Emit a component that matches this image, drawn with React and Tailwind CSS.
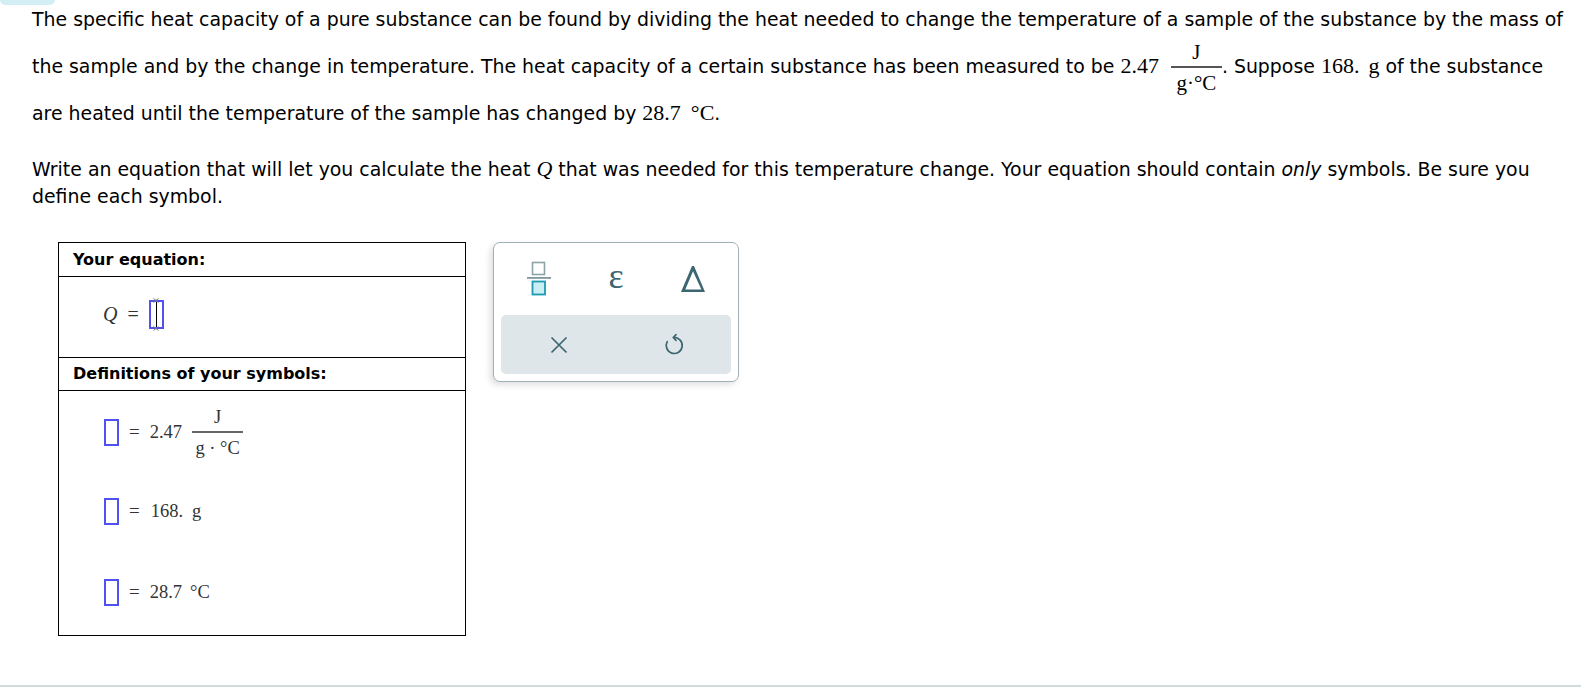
import React from 'react';

// serif math text, like the rendered formulas
const M = ({ children, className = '' }) => (
    <span className={`font-['Liberation_Serif',serif] ${className}`}>{children}</span>
);

function Fraction({ num, den, size = 'text-[20px]', width = 'w-[51px]', lineColor = 'bg-[#555]' }) {
    return (
        <span className={`inline-flex flex-col items-center align-middle -my-[6px] ${width} font-['Liberation_Serif',serif] ${size}`}>
            <span className="leading-[24px] pb-[2px]">{num}</span>
            <span className={`h-[2px] w-full ${lineColor}`} />
            <span className="leading-[24px] pt-[3px]">{den}</span>
        </span>
    );
}

function SymbolBox({ cursor = false, tall = false }) {
    return (
        <span
            className={`relative inline-flex justify-center border-2 border-[#5151f2] bg-white ${tall ? 'w-[15px] h-[29px]' : 'w-[15px] h-[27px]'}`}
        >
            {cursor && (
                <>
                    <span className="w-px h-full bg-black" />
                    <svg className="absolute -top-[4px] left-1/2 -translate-x-1/2" width="7" height="5" viewBox="0 0 7 5">
                        <path d="M1 0.5 L6 4.5 M6 0.5 L1 4.5" stroke="#777" strokeWidth="1" />
                    </svg>
                    <svg className="absolute -bottom-[4px] left-1/2 -translate-x-1/2" width="7" height="5" viewBox="0 0 7 5">
                        <path d="M1 0.5 L6 4.5 M6 0.5 L1 4.5" stroke="#777" strokeWidth="1" />
                    </svg>
                </>
            )}
        </span>
    );
}

function Palette() {
    return (
        <div className="w-[246px] h-[140px] rounded-[7px] border border-[#9fb0b6] bg-white shadow-[-3px_3px_6px_rgba(0,0,0,0.12)] flex flex-col">
            {/* Top row: template buttons */}
            <div className="grid grid-cols-3 px-[6px] h-[72px] items-center">
                <div className="flex justify-center">
                    <svg width="24" height="36" viewBox="0 0 24 36">
                        <rect x="5.5" y="1.5" width="12" height="12" fill="none" stroke="#8da3aa" strokeWidth="1.6" />
                        <rect x="0" y="16" width="24" height="1.8" fill="#7f969e" />
                        <rect x="5.5" y="20.5" width="12.5" height="13" fill="#c9edf2" stroke="#1c9aae" strokeWidth="1.8" />
                    </svg>
                </div>
                <div className="flex justify-center">
                    <span className="font-['Liberation_Serif',serif] text-[36px] leading-none text-[#3d6672] -mt-[6px]">ε</span>
                </div>
                <div className="flex justify-center">
                    <svg width="24" height="26" viewBox="0 0 24 26">
                        <path
                            fillRule="evenodd"
                            fill="#3d6672"
                            d="M11 0 L13 0 L24 26 L0 26 Z M12 5.2 L4.3 23.6 L20.4 23.6 Z"
                        />
                    </svg>
                </div>
            </div>
            {/* Bottom row: clear and undo */}
            <div className="mx-[7px] h-[59px] rounded-[5px] bg-[#dfe6e9] grid grid-cols-2 items-center">
                <div className="flex justify-center">
                    <svg width="18" height="18" viewBox="0 0 18 18">
                        <path d="M1.5 1.5 L16.5 16.5 M16.5 1.5 L1.5 16.5" stroke="#3d6672" strokeWidth="1.7" />
                    </svg>
                </div>
                <div className="flex justify-center">
                    <svg width="22" height="24" viewBox="0 0 22 24">
                        <path
                            d="M10.5 4.5 A8 8 0 1 1 4.2 8.6"
                            fill="none"
                            stroke="#3d6672"
                            strokeWidth="1.7"
                            strokeLinecap="round"
                        />
                        <path
                            d="M13 1.6 L10.3 4.5 L13 7.4"
                            fill="none"
                            stroke="#3d6672"
                            strokeWidth="1.7"
                            strokeLinecap="round"
                            strokeLinejoin="round"
                        />
                    </svg>
                </div>
            </div>
        </div>
    );
}

function EquationTable() {
    return (
        <div className="w-[408px] border border-black font-['DejaVu_Sans',sans-serif] text-black">
            {/* Header */}
            <div className="h-[33px] flex items-center px-[14px] text-[16px] font-bold">Your equation:</div>

            {/* Equation row */}
            <div className="h-[81px] border-t border-black flex items-center pl-[44px] pb-[6px] text-[#333]">
                <M className="italic text-[20px]">Q</M>
                <M className="text-[20px] ml-[10px] mr-[10px]">=</M>
                <SymbolBox cursor tall />
            </div>

            {/* Definitions header */}
            <div className="h-[33px] border-t border-black flex items-center px-[14px] text-[16px] font-bold">
                Definitions of your symbols:
            </div>

            {/* Definitions */}
            <div className="border-t border-black pl-[45px] pt-[28px] pb-[29px] flex flex-col text-[#333]">
                <div className="h-[27px] flex items-center">
                    <SymbolBox />
                    <M className="text-[19px] ml-[10px]">=</M>
                    <M className="text-[18.5px] ml-[10px]">2.47</M>
                    <span className="ml-[10px]">
                        <Fraction num="J" den="g · °C" size="text-[18.5px]" width="w-[51px]" lineColor="bg-[#666]" />
                    </span>
                </div>
                <div className="h-[27px] flex items-center mt-[52px]">
                    <SymbolBox />
                    <M className="text-[19px] ml-[10px]">=</M>
                    <M className="text-[18.5px] ml-[11px]">168.</M>
                    <M className="text-[18.5px] ml-[9px]">g</M>
                </div>
                <div className="h-[27px] flex items-center mt-[54px]">
                    <SymbolBox />
                    <M className="text-[19px] ml-[10px]">=</M>
                    <M className="text-[18.5px] ml-[10px]">28.7</M>
                    <M className="text-[18.5px] ml-[8px]">°C</M>
                </div>
            </div>
        </div>
    );
}

export default function App() {
    return (
        <div className="relative w-full h-[687px] bg-white flex flex-col font-['DejaVu_Sans',sans-serif] text-black overflow-hidden">
            {/* cut-off tab at the top left */}
            <div className="absolute left-0 top-0 w-[55px] h-[5px] rounded-b-[6px] bg-[#d3eef4]" />

            <div className="pl-[32px]">
                {/* Problem statement */}
                <p className="text-[18.9px] leading-[47px] -mt-[4px] whitespace-nowrap">
                    The specific heat capacity of a pure substance can be found by dividing the heat needed to change the temperature of a sample of the substance by the mass of
                    <br />
                    the sample and by the change in temperature. The heat capacity of a certain substance has been measured to be{' '}
                    <M className="text-[22px] leading-none">2.47</M>
                    <span className="ml-[12px]">
                        <Fraction num="J" den="g·°C" size="text-[21px]" />
                    </span>
                    . Suppose <M className="text-[22px] leading-none">168.</M>
                    <M className="text-[22px] leading-none ml-[9px]">g</M> of the substance
                    <br />
                    are heated until the temperature of the sample has changed by{' '}
                    <M className="text-[22px] leading-none">28.7</M>
                    <M className="text-[22px] leading-none ml-[10px]">°C</M>.
                </p>

                <p className="text-[18.9px] leading-[27px] mt-[19px] whitespace-nowrap">
                    Write an equation that will let you calculate the heat <M className="italic text-[22px] leading-none">Q</M> that was needed for this temperature change. Your equation should contain <span className="italic">only</span> symbols. Be sure you
                    <br />
                    define each symbol.
                </p>

                {/* Answer area */}
                <div className="mt-[32px] ml-[26px] flex items-start gap-[27px]">
                    <EquationTable />
                    <Palette />
                </div>
            </div>

            <div className="mt-auto h-[2px] bg-[#d0dcdc]" />
        </div>
    );
}
